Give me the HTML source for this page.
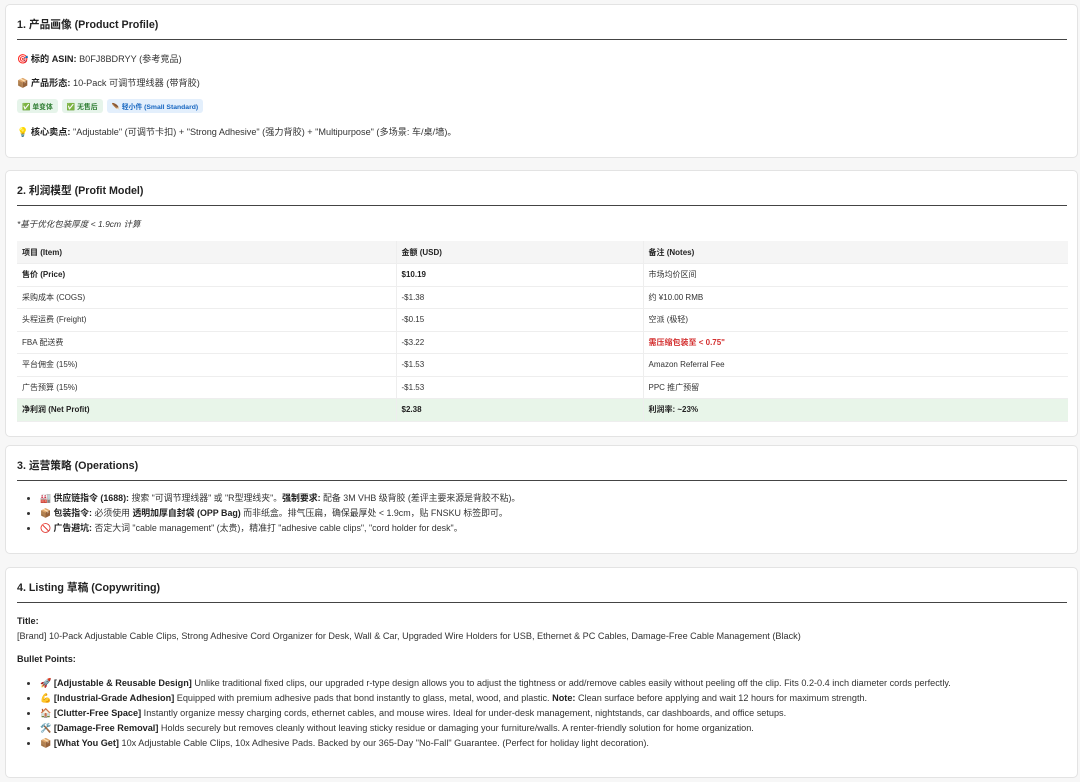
<!DOCTYPE html>
<html><head><meta charset="utf-8"><style>
*{margin:0;padding:0;box-sizing:border-box}
body{width:1080px;height:782px;background:#f7f7f7;font-family:"Liberation Sans","Noto Sans CJK SC",sans-serif;color:#333;font-size:9.15px;position:relative;overflow:hidden}
.card{position:absolute;left:5px;width:1073px;background:#fff;border:1px solid #e3e3e3;border-radius:5px}
.h{position:absolute;left:11px;font-size:10.7px;font-weight:bold;color:#222}
.hr{position:absolute;left:11px;right:10px;height:1px;background:#444}
.t{position:absolute;left:11px;white-space:nowrap;font-size:9.15px}
b{color:#222}
.tag{display:inline-block;padding:2px 5px;border-radius:3px;font-size:6.8px;font-weight:bold;margin-right:4px}
table{position:absolute;left:11px;top:70px;width:1051px;border-collapse:collapse;font-size:8px}
td{height:22.5px;padding:0 5px;border-bottom:1px solid #eee}
td+td{border-left:1px solid #eee}
tr.hd td{background:#f5f5f5;font-weight:bold;color:#222}
tr.np td{background:#e8f5e9;font-weight:bold;color:#222}
ul{position:absolute;left:33px;list-style:disc;font-size:9.15px}
li{height:15px;line-height:15px;white-space:nowrap;padding-left:1px}
</style></head><body>
<div class="card" style="top:4px;height:154px">
<div class="h" style="top:12px">1. 产品画像 (Product Profile)</div>
<div class="hr" style="top:34px"></div>
<div class="t" style="top:46px">🎯 <b>标的 ASIN:</b> B0FJ8BDRYY (参考竞品)</div>
<div class="t" style="top:70px">📦 <b>产品形态:</b> 10-Pack 可调节理线器 (带背胶)</div>
<div class="t" style="top:94px"><span class="tag" style="background:#e6f4ea;color:#2e7d32">✅ 单变体</span><span class="tag" style="background:#e6f4ea;color:#2e7d32">✅ 无售后</span><span class="tag" style="background:#e3effc;color:#1565c0">🪶 轻小件 (Small Standard)</span></div>
<div class="t" style="top:119px">💡 <b>核心卖点:</b> "Adjustable" (可调节卡扣) + "Strong Adhesive" (强力背胶) + "Multipurpose" (多场景: 车/桌/墙)。</div>
</div>
<div class="card" style="top:170px;height:267px">
<div class="h" style="top:12px">2. 利润模型 (Profit Model)</div>
<div class="hr" style="top:34px"></div>
<div class="t" style="top:47px;font-style:italic;font-size:8.5px">*基于优化包装厚度 &lt; 1.9cm 计算</div>
<table>
<tr class="hd"><td style="width:379px">项目 (Item)</td><td style="width:247px">金额 (USD)</td><td>备注 (Notes)</td></tr>
<tr><td><b>售价 (Price)</b></td><td><b>$10.19</b></td><td>市场均价区间</td></tr>
<tr><td>采购成本 (COGS)</td><td>-$1.38</td><td>约 ¥10.00 RMB</td></tr>
<tr><td>头程运费 (Freight)</td><td>-$0.15</td><td>空派 (极轻)</td></tr>
<tr><td>FBA 配送费</td><td>-$3.22</td><td style="color:#d32f2f;font-weight:bold">需压缩包装至 &lt; 0.75"</td></tr>
<tr><td>平台佣金 (15%)</td><td>-$1.53</td><td>Amazon Referral Fee</td></tr>
<tr><td>广告预算 (15%)</td><td>-$1.53</td><td>PPC 推广预留</td></tr>
<tr class="np"><td>净利润 (Net Profit)</td><td>$2.38</td><td>利润率: ~23%</td></tr>
</table>
</div>
<div class="card" style="top:445px;height:109px">
<div class="h" style="top:12px">3. 运营策略 (Operations)</div>
<div class="hr" style="top:34px"></div>
<ul style="top:45px;font-size:8.9px">
<li>🏭 <b>供应链指令 (1688):</b> 搜索 "可调节理线器" 或 "R型理线夹"。<b>强制要求:</b> 配备 3M VHB 级背胶 (差评主要来源是背胶不粘)。</li>
<li>📦 <b>包装指令:</b> 必须使用 <b>透明加厚自封袋 (OPP Bag)</b> 而非纸盒。排气压扁，确保最厚处 &lt; 1.9cm，贴 FNSKU 标签即可。</li>
<li>🚫 <b>广告避坑:</b> 否定大词 "cable management" (太贵)，精准打 "adhesive cable clips", "cord holder for desk"。</li>
</ul>
</div>
<div class="card" style="top:567px;height:211px">
<div class="h" style="top:12px">4. Listing 草稿 (Copywriting)</div>
<div class="hr" style="top:34px"></div>
<div class="t" style="top:48px"><b>Title:</b></div>
<div class="t" style="top:63px">[Brand] 10-Pack Adjustable Cable Clips, Strong Adhesive Cord Organizer for Desk, Wall &amp; Car, Upgraded Wire Holders for USB, Ethernet &amp; PC Cables, Damage-Free Cable Management (Black)</div>
<div class="t" style="top:86px"><b>Bullet Points:</b></div>
<ul style="top:108px">
<li>🚀 <b>[Adjustable &amp; Reusable Design]</b> Unlike traditional fixed clips, our upgraded r-type design allows you to adjust the tightness or add/remove cables easily without peeling off the clip. Fits 0.2-0.4 inch diameter cords perfectly.</li>
<li>💪 <b>[Industrial-Grade Adhesion]</b> Equipped with premium adhesive pads that bond instantly to glass, metal, wood, and plastic. <b>Note:</b> Clean surface before applying and wait 12 hours for maximum strength.</li>
<li>🏠 <b>[Clutter-Free Space]</b> Instantly organize messy charging cords, ethernet cables, and mouse wires. Ideal for under-desk management, nightstands, car dashboards, and office setups.</li>
<li>🛠️ <b>[Damage-Free Removal]</b> Holds securely but removes cleanly without leaving sticky residue or damaging your furniture/walls. A renter-friendly solution for home organization.</li>
<li>📦 <b>[What You Get]</b> 10x Adjustable Cable Clips, 10x Adhesive Pads. Backed by our 365-Day "No-Fall" Guarantee. (Perfect for holiday light decoration).</li>
</ul>
</div>
</body></html>
